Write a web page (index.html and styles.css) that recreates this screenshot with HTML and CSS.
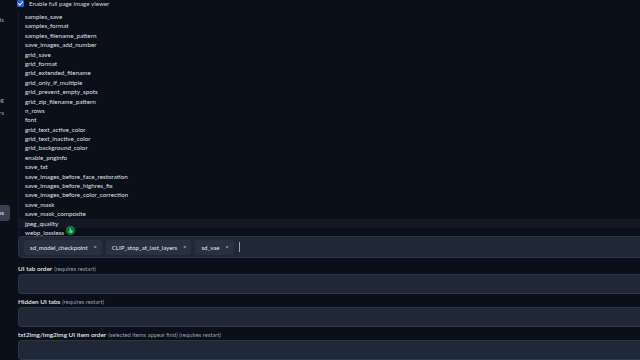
FILE: index.html
```html
<!DOCTYPE html>
<html>
<head>
<meta charset="utf-8">
<link rel="stylesheet" href="styles.css">
</head>
<body>
<div class="page">
  <nav class="sidebar">
    <div class="tab t1">Saving images/grids</div>
    <div class="tab t2">Upscaling</div>
    <div class="tab t3">Sampler parameters</div>
    <div class="tab t4 selected">Settings tabs</div>
  </nav>
  <main class="main">
    <div class="check-row">
      <span class="checkbox"><svg viewBox="0 0 8 8" width="7" height="7"><path d="M1.6 4.1 L3.3 5.7 L6.4 2.3" fill="none" stroke="#fff" stroke-width="1.2" stroke-linecap="round" stroke-linejoin="round"/></svg></span>
      <span class="check-label">Enable full page image viewer</span>
    </div>
    <ul class="options">
      <li>samples_save</li>
      <li>samples_format</li>
      <li>samples_filename_pattern</li>
      <li>save_images_add_number</li>
      <li>grid_save</li>
      <li>grid_format</li>
      <li>grid_extended_filename</li>
      <li>grid_only_if_multiple</li>
      <li>grid_prevent_empty_spots</li>
      <li>grid_zip_filename_pattern</li>
      <li>n_rows</li>
      <li>font</li>
      <li>grid_text_active_color</li>
      <li>grid_text_inactive_color</li>
      <li>grid_background_color</li>
      <li>enable_pnginfo</li>
      <li>save_txt</li>
      <li>save_images_before_face_restoration</li>
      <li>save_images_before_highres_fix</li>
      <li>save_images_before_color_correction</li>
      <li>save_mask</li>
      <li>save_mask_composite</li>
      <li class="active">jpeg_quality</li>
      <li class="cursor-host">webp_lossless<span class="cursor"><svg viewBox="0 0 12 12" width="11" height="11"><circle cx="6" cy="6" r="5.2" fill="#15803d" opacity="0.85"/><path d="M4.6 2.6 v4.4 l-0.9 -0.8 l-0.6 0.6 l1.8 2.3 h3.2 l0.7 -1.4 v-2.1 l-1.9 -0.4 v-2.6 z" fill="#4ade80" stroke="#052e16" stroke-width="0.5"/></svg></span></li>
    </ul>
    <div class="multiselect">
      <span class="chip">sd_model_checkpoint<span class="x">×</span></span>
      <span class="chip">CLIP_stop_at_last_layers<span class="x">×</span></span>
      <span class="chip">sd_vae<span class="x">×</span></span>
      <span class="caret"></span>
    </div>
    <div class="field first">
      <div class="label"><span class="name">UI tab order</span><span class="note">(requires restart)</span></div>
      <div class="input"></div>
    </div>
    <div class="field">
      <div class="label"><span class="name">Hidden UI tabs</span><span class="note">(requires restart)</span></div>
      <div class="input"></div>
    </div>
    <div class="field">
      <div class="label"><span class="name">txt2img/img2img UI item order</span><span class="note">(selected items appear first) (requires restart)</span></div>
      <div class="input"></div>
    </div>
  </main>
</div>
</body>
</html>
```
FILE: styles.css
```css
html, body {
  margin: 0;
  padding: 0;
}
body {
  width: 640px;
  height: 360px;
  overflow: hidden;
  background: #0b0f19;
  font-family: "Lato", "Open Sans", sans-serif;
  color: #d1d5db;
}
.page {
  display: flex;
  height: 360px;
}
.sidebar {
  flex: 0 0 12px;
  width: 12px;
  overflow: hidden;
  display: flex;
  flex-direction: column;
  padding-top: 15px;
  box-sizing: border-box;
}
.tab {
  width: 80px;
  margin-left: -68px;
  text-align: right;
  font-size: 6.5px;
  line-height: 10px;
  color: #9ca3af;
  white-space: nowrap;
  padding-right: 8px;
  box-sizing: border-box;
}
.t2 { margin-top: 70px; }
.t3 { margin-top: 3px; }
.t4 {
  margin-top: 87px;
  line-height: 16px;
  height: 16px;
  color: #e5e7eb;
}
.tab.selected {
  background: #374151;
  border-radius: 0 3px 3px 0;
  width: 78px;
  padding-right: 6px;
}
.main {
  flex: 0 0 700px;
  padding-left: 6px;
  box-sizing: border-box;
}
.check-row {
  display: flex;
  align-items: center;
  gap: 5px;
  height: 8px;
  margin-top: -1px;
}
.checkbox {
  width: 7px;
  height: 7px;
  margin-left: -1px;
  background: #2563eb;
  border-radius: 1.5px;
  display: flex;
  align-items: center;
  justify-content: center;
}
.checkbox svg { display: block; }
.check-label {
  font-size: 6.2px;
  color: #d1d5db;
}
.options {
  list-style: none;
  margin: 5px 0 0 0;
  padding: 0;
  border-left: 1px solid #161c28;
}
.options li {
  font-size: 6.3px;
  line-height: 9.4px;
  height: 9.4px;
  padding-left: 6px;
  color: #dde0e5;
  white-space: nowrap;
}
.options li.active {
  background: #121826;
}
.cursor-host {
  position: relative;
}
.cursor {
  position: absolute;
  left: 46px;
  top: -3px;
}
.cursor svg { display: block; }
.multiselect {
  margin-top: -1px;
  height: 22px;
  box-sizing: border-box;
  background: #1f2836;
  border: 1px solid #2c3545;
  border-radius: 4px;
  display: flex;
  align-items: center;
  gap: 4px;
  padding: 0 5px;
}
.chip {
  height: 15px;
  display: flex;
  align-items: center;
  padding: 0 5px 0 6px;
  background: #283140;
  border-radius: 3px;
  font-size: 6.1px;
  color: #e5e7eb;
  white-space: nowrap;
}
.chip .x {
  margin-left: 6px;
  font-size: 5.5px;
  color: #cbd5e1;
}
.caret {
  width: 1px;
  height: 10px;
  background: #9ca3af;
  margin-left: 1px;
}
.field {
  margin-top: 4.5px;
}
.field.first {
  margin-top: 7px;
}
.label {
  display: flex;
  align-items: center;
  gap: 2px;
  height: 8.5px;
  font-size: 6.3px;
  line-height: 8.5px;
  white-space: nowrap;
}
.label .name {
  font-size: 6.4px;
  color: #e8eaee;
  font-weight: 600;
}
.label .note {
  font-size: 5.8px;
  color: #9ca3af;
}
.input {
  height: 20px;
  box-sizing: border-box;
  background: #1f2836;
  border: 1px solid #2c3545;
  border-bottom-color: #2b3a52;
  border-radius: 4px;
}
```
